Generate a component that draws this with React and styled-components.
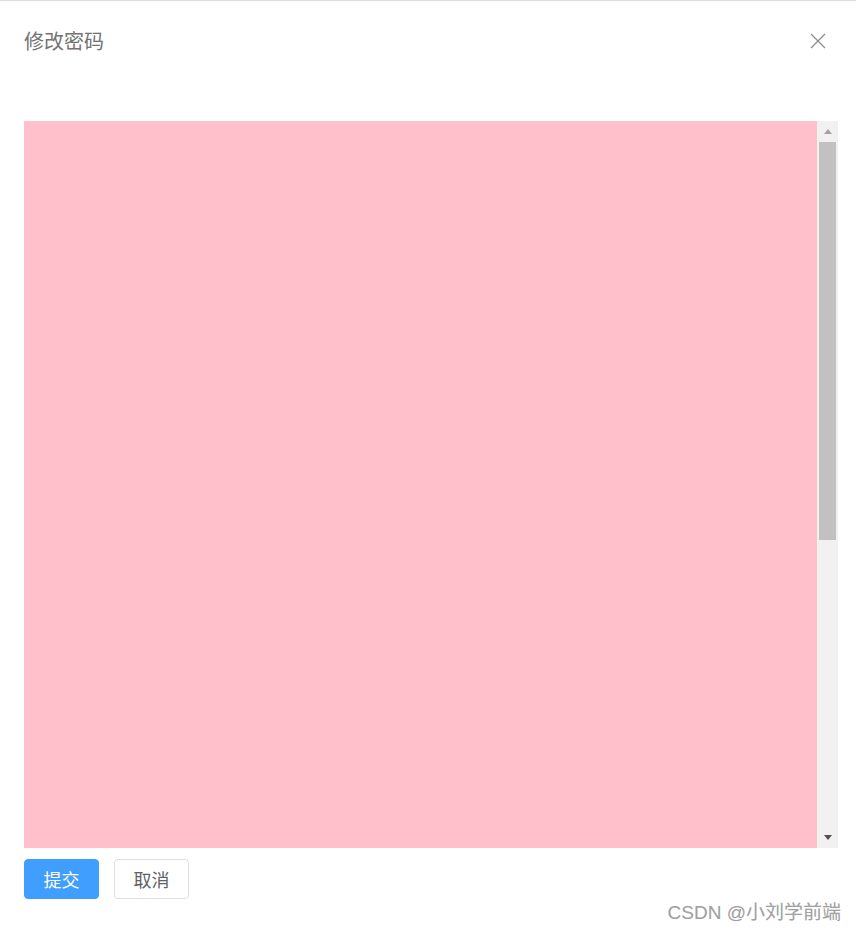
import React from 'react';
import styled, { createGlobalStyle } from 'styled-components';

const GlobalStyle = createGlobalStyle`
    html, body {
        margin: 0;
        padding: 0;
        background: #fff;
    }
    body {
        font-family: "Noto Sans CJK SC", "Noto Sans", "Liberation Sans", sans-serif;
    }
`;

const Dialog = styled.div`
    width: 856px;
    height: 931px;
    box-sizing: border-box;
    border-top: 1px solid #dcdcdc;
    display: flex;
    flex-direction: column;
    position: relative;
`;

const Header = styled.div`
    display: flex;
    align-items: center;
    justify-content: space-between;
    padding: 27px 30px 0 24px;
    height: 26px;
`;

const Title = styled.span`
    font-size: 20px;
    line-height: 26px;
    color: #737373;
`;

const CloseButton = styled.button`
    border: none;
    background: transparent;
    padding: 0;
    width: 16px;
    height: 16px;
    display: flex;
    cursor: pointer;
`;

const Body = styled.div`
    padding: 67px 18px 0 24px;
    display: flex;
`;

const Viewport = styled.div`
    width: 793px;
    height: 727px;
    overflow: hidden;
`;

const PinkBlock = styled.div`
    height: 1300px;
    background: pink;
`;

const ScrollTrack = styled.div`
    width: 21px;
    height: 727px;
    background: #f1f1f1;
    display: flex;
    flex-direction: column;
    align-items: center;
`;

const ArrowCell = styled.div`
    height: 21px;
    width: 100%;
    display: flex;
    align-items: center;
    justify-content: center;
`;

const Triangle = styled.div`
    width: 0;
    height: 0;
    border-left: 4.5px solid transparent;
    border-right: 4.5px solid transparent;
    ${(p) =>
        p.up
            ? 'border-bottom: 5px solid #a3a3a3;'
            : 'border-top: 5px solid #505050;'}
`;

const Thumb = styled.div`
    width: 17px;
    height: 398px;
    background: #c1c1c1;
`;

const Spacer = styled.div`
    flex: 1;
`;

const Footer = styled.div`
    display: flex;
    gap: 15px;
    padding: 11px 24px 0;
`;

const Button = styled.button`
    height: 40px;
    padding: 0 18.5px;
    font-family: inherit;
    font-size: 18px;
    border-radius: 4px;
    cursor: pointer;
    border: 1px solid ${(p) => (p.primary ? '#409eff' : '#dcdfe6')};
    background: ${(p) => (p.primary ? '#409eff' : '#fff')};
    color: ${(p) => (p.primary ? '#fff' : '#606266')};
`;

const Watermark = styled.div`
    position: absolute;
    right: 15px;
    top: 899px;
    font-family: "Liberation Sans", "Noto Sans CJK SC", sans-serif;
    font-size: 19px;
    line-height: 26px;
    color: #a0a0a0;
    text-shadow: 0 0 1px rgba(0, 0, 0, 0.08);
`;

const CloseIcon = () => (
    <svg width="16" height="16" viewBox="0 0 16 16">
        <path d="M1 1 L15 15 M15 1 L1 15" stroke="#8a8d92" strokeWidth="1.3" fill="none" />
    </svg>
);

const App = () => {
    return (
        <>
            <GlobalStyle />
            <Dialog>
                <Header>
                    <Title>修改密码</Title>
                    <CloseButton aria-label="关闭">
                        <CloseIcon />
                    </CloseButton>
                </Header>
                <Body>
                    <Viewport>
                        <PinkBlock />
                    </Viewport>
                    <ScrollTrack>
                        <ArrowCell>
                            <Triangle up />
                        </ArrowCell>
                        <Thumb />
                        <Spacer />
                        <ArrowCell>
                            <Triangle />
                        </ArrowCell>
                    </ScrollTrack>
                </Body>
                <Footer>
                    <Button primary>提交</Button>
                    <Button>取消</Button>
                </Footer>
                <Watermark>CSDN @小刘学前端</Watermark>
            </Dialog>
        </>
    );
};

export default App;
